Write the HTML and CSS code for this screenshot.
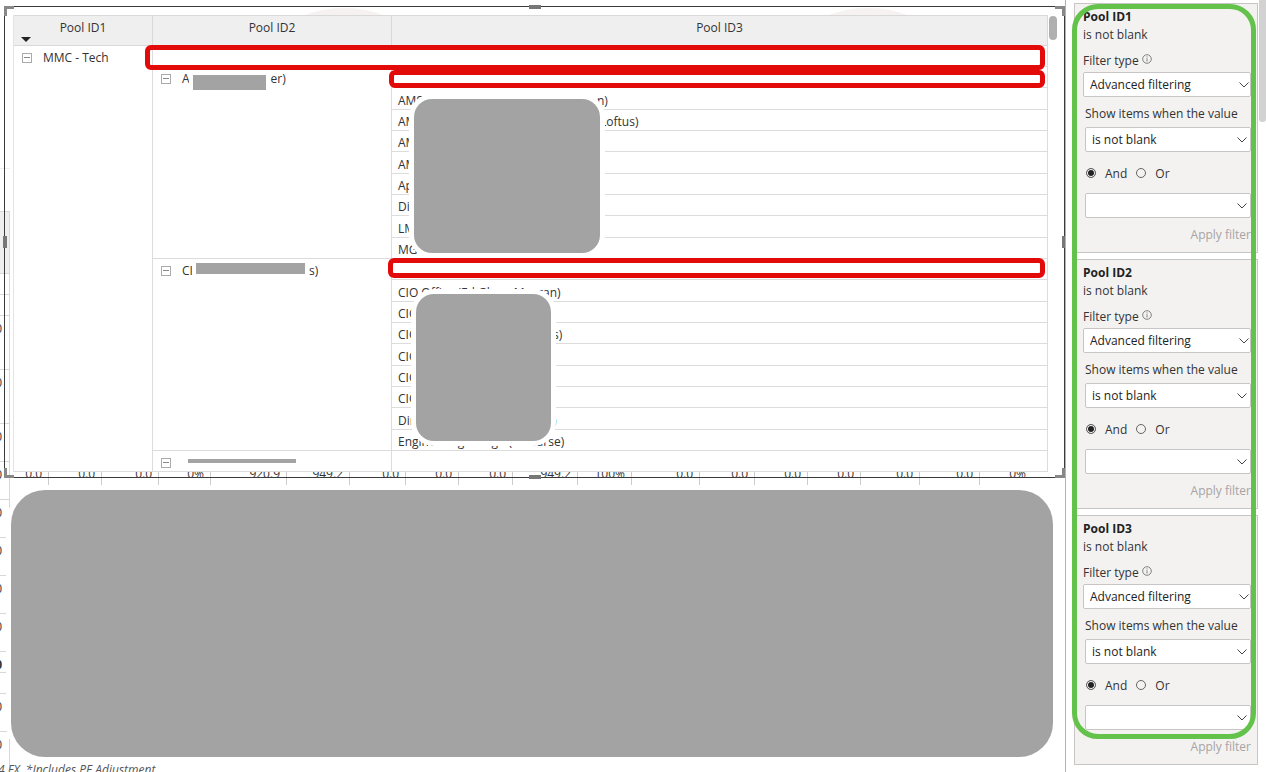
FILE: index.html
```html
<!DOCTYPE html>
<html lang="en">
<head>
<meta charset="UTF-8" />
<meta name="viewport" content="width=device-width, initial-scale=1" />
<title>Pool Report</title>
<link rel="stylesheet" href="styles.css">
</head>
<body>

<main class="canvas">
  <!-- report page behind the selected visual -->
  <div class="edge">
    <div class="edge-top"></div>
    <div class="edge-gap"></div>
    <div class="edge-head"></div>
    <div class="short"></div>
    <div class="short"></div>
    <div class="tall">0</div>
    <div class="tall">0</div>
    <div>0</div>
    <div>0</div>
    <div>0</div>
    <div>0</div>
    <div>0</div>
    <div>0</div>
    <div class="short total">0</div>
    <div class="short"></div>
    <div>0</div>
    <div class="last">0</div>
  </div>

  <div class="page">
    <div class="page-top">
      <span class="bubble"></span>
      <span class="bubble"></span>
    </div>
    <div class="totals">
      <span>0.0</span><span>0.0</span><span>0.0</span><span>0%</span><span>920.9</span><span>949.2</span>
      <span>0.0</span><span>0.0</span><span>0.0</span><span>949.2</span><span>100%</span><span>0.0</span>
      <span>0.0</span><span>0.0</span><span>0.0</span><span>0.0</span><span>0.0</span><span>0%</span>
    </div>
    <div class="cover"></div>
    <p class="footnote">4 FX. *Includes PE Adjustment</p>
  </div>

  <!-- selected matrix visual -->
  <section class="visual">
    <i class="corner tl"></i><i class="corner tr"></i><i class="corner bl"></i><i class="corner br"></i>
    <i class="handle top"></i><i class="handle bottom"></i><i class="handle left"></i><i class="handle right"></i>
    <table class="matrix">
      <colgroup><col class="col1"><col class="col2"><col></colgroup>
      <thead>
        <tr>
          <th>Pool ID1<span class="sort"></span></th>
          <th>Pool ID2</th>
          <th>Pool ID3</th>
        </tr>
      </thead>
      <tbody>
        <tr>
          <td class="group" rowspan="20"><div class="node"><button class="toggle" aria-label="Collapse"></button>MMC - Tech</div></td>
          <td class="marked" colspan="2"><span class="mark mark-wide"></span></td>
        </tr>
        <tr>
          <td class="group" rowspan="9"><div class="node"><button class="toggle" aria-label="Collapse"></button>A<span class="bar bar-a"></span>er)</div></td>
          <td class="marked"><span class="mark mark-first"></span></td>
        </tr>
        <tr><td class="marked"><span class="lead">AMS</span>n)<span class="block block-a"></span></td></tr>
        <tr><td><span class="lead lead-b">AMS</span>Loftus)</td></tr>
        <tr><td>AMS</td></tr>
        <tr><td>AMS</td></tr>
        <tr><td>App</td></tr>
        <tr><td>Digi</td></tr>
        <tr><td>LMS</td></tr>
        <tr><td>MGT</td></tr>
        <tr>
          <td class="group" rowspan="9"><div class="node"><button class="toggle" aria-label="Collapse"></button>CI<span class="bar bar-c"></span>s)</div></td>
          <td class="marked"><span class="mark"></span></td>
        </tr>
        <tr><td class="marked">CIO Office (Ed Glynn Morgan)<span class="block block-c"></span></td></tr>
        <tr><td>CIO</td></tr>
        <tr><td><span class="lead lead-c">CIO</span>s)</td></tr>
        <tr><td>CIO</td></tr>
        <tr><td>CIO</td></tr>
        <tr><td>CIO</td></tr>
        <tr><td><span class="lead lead-c">Dire</span>)</td></tr>
        <tr><td>Engineering Design (E Coarse)</td></tr>
        <tr>
          <td class="group"><div class="node"><button class="toggle" aria-label="Collapse"></button><span class="bar bar-last"></span></div></td>
          <td></td>
        </tr>
      </tbody>
    </table>
    <div class="scroll"></div>
  </section>
</main>

<aside class="filters">
  <div class="cards">
    <section class="card">
      <h2>Pool ID1</h2>
      <p>is not blank</p>
      <div class="type">
        <label for="type1">Filter type</label>
        <svg class="info" viewBox="0 0 10 10"><circle cx="5" cy="5" r="4.3"/><path d="M5 4.3v3.2M5 2.4v1"/></svg>
      </div>
      <div class="drop wide">
        <select id="type1"><option>Advanced filtering</option></select>
        <svg viewBox="0 0 10 6"><path d="M.5.5 5 5 9.5.5"/></svg>
      </div>
      <div class="rule">
        <label for="cond1">Show items when the value</label>
        <div class="drop">
          <select id="cond1"><option>is not blank</option></select>
          <svg viewBox="0 0 10 6"><path d="M.5.5 5 5 9.5.5"/></svg>
        </div>
        <div class="logic">
          <input type="radio" name="logic1" id="and1" checked><label for="and1">And</label>
          <input type="radio" name="logic1" id="or1"><label for="or1">Or</label>
        </div>
        <div class="drop">
          <select aria-label="Second condition"><option></option></select>
          <svg viewBox="0 0 10 6"><path d="M.5.5 5 5 9.5.5"/></svg>
        </div>
      </div>
      <button class="apply" disabled>Apply filter</button>
    </section>

    <section class="card">
      <h2>Pool ID2</h2>
      <p>is not blank</p>
      <div class="type">
        <label for="type2">Filter type</label>
        <svg class="info" viewBox="0 0 10 10"><circle cx="5" cy="5" r="4.3"/><path d="M5 4.3v3.2M5 2.4v1"/></svg>
      </div>
      <div class="drop wide">
        <select id="type2"><option>Advanced filtering</option></select>
        <svg viewBox="0 0 10 6"><path d="M.5.5 5 5 9.5.5"/></svg>
      </div>
      <div class="rule">
        <label for="cond2">Show items when the value</label>
        <div class="drop">
          <select id="cond2"><option>is not blank</option></select>
          <svg viewBox="0 0 10 6"><path d="M.5.5 5 5 9.5.5"/></svg>
        </div>
        <div class="logic">
          <input type="radio" name="logic2" id="and2" checked><label for="and2">And</label>
          <input type="radio" name="logic2" id="or2"><label for="or2">Or</label>
        </div>
        <div class="drop">
          <select aria-label="Second condition"><option></option></select>
          <svg viewBox="0 0 10 6"><path d="M.5.5 5 5 9.5.5"/></svg>
        </div>
      </div>
      <button class="apply" disabled>Apply filter</button>
    </section>

    <section class="card">
      <h2>Pool ID3</h2>
      <p>is not blank</p>
      <div class="type">
        <label for="type3">Filter type</label>
        <svg class="info" viewBox="0 0 10 10"><circle cx="5" cy="5" r="4.3"/><path d="M5 4.3v3.2M5 2.4v1"/></svg>
      </div>
      <div class="drop wide">
        <select id="type3"><option>Advanced filtering</option></select>
        <svg viewBox="0 0 10 6"><path d="M.5.5 5 5 9.5.5"/></svg>
      </div>
      <div class="rule">
        <label for="cond3">Show items when the value</label>
        <div class="drop">
          <select id="cond3"><option>is not blank</option></select>
          <svg viewBox="0 0 10 6"><path d="M.5.5 5 5 9.5.5"/></svg>
        </div>
        <div class="logic">
          <input type="radio" name="logic3" id="and3" checked><label for="and3">And</label>
          <input type="radio" name="logic3" id="or3"><label for="or3">Or</label>
        </div>
        <div class="drop">
          <select aria-label="Second condition"><option></option></select>
          <svg viewBox="0 0 10 6"><path d="M.5.5 5 5 9.5.5"/></svg>
        </div>
      </div>
      <button class="apply" disabled>Apply filter</button>
    </section>
    <div class="ring"></div>
  </div>
  <div class="pane-scroll"></div>
</aside>

</body>
</html>
```

FILE: styles.css
```css
* {
  box-sizing: border-box;
}
body {
  margin: 0;
  height: 100vh;
  overflow: hidden;
  display: flex;
  font-family: "Open Sans", sans-serif;
  font-size: 12px;
  color: #333;
  background: #fff;
}
h2, p {
  margin: 0;
}

/* report page */
.canvas {
  position: relative;
  flex: 1;
  min-width: 0;
  display: flex;
  overflow: hidden;
  border-right: 1px solid #b5b2b0;
}
.edge {
  width: 10px;
  flex: none;
  line-height: 26px;
}
.edge div {
  height: 38px;
  display: flex;
  justify-content: flex-end;
  overflow: hidden;
  padding-right: 7px;
  border-bottom: 1px solid #d8d8d8;
  border-right: 1px solid #d8d8d8;
}
.edge .edge-top {
  height: 169px;
  border-right: none;
  border-color: #eee;
}
.edge .edge-gap {
  height: 43px;
  border-right: none;
}
.edge .edge-head {
  height: 62px;
  background: #efefef;
}
.edge .short {
  height: 21px;
}
.edge .tall {
  height: 54px;
}
.edge .total {
  font-weight: bold;
}
.edge .last {
  border-bottom: none;
}
.page {
  flex: 1;
  min-width: 0;
}
.page-top {
  height: 466px;
  padding: 8px 13% 0 26%;
  display: flex;
  justify-content: space-between;
}
.bubble {
  width: 120px;
  height: 60px;
  border-radius: 50%;
  background: #f5f2f1;
}
.totals {
  display: grid;
  grid-template-columns: 39fr 53fr 57fr 52fr 76fr 63fr 56fr 53fr 54fr 65fr 54fr 68fr 55fr 53fr 53fr 59fr 60fr 52fr;
  padding-right: 33px;
  height: 19px;
  line-height: 16px;
}
.totals span {
  text-align: right;
  padding-right: 6px;
  border-right: 1px solid #ccc;
}
.totals span:last-child {
  border-right: none;
}
.cover {
  position: relative;
  height: 267px;
  margin: 5px 12px 0 1px;
  border-radius: 34px;
  background: #a3a3a3;
  box-shadow: 0 0 0 5px #fff;
}
.footnote {
  margin: 5px 0 0 -12px;
  font-style: italic;
  line-height: 16px;
  color: #555;
}

/* selected visual */
.visual {
  position: absolute;
  top: 6px;
  left: 4px;
  right: 0;
  display: flex;
  padding: 8px 6px 5px 8px;
  border: 1px solid #3b3b3b;
}
.corner {
  position: absolute;
  width: 10px;
  height: 10px;
  border: 0 solid #888;
}
.tl { top: -1px; left: -1px; border-width: 3px 0 0 3px; }
.tr { top: -1px; right: -1px; border-width: 3px 3px 0 0; }
.bl { bottom: -1px; left: -1px; border-width: 0 0 3px 3px; }
.br { bottom: -1px; right: -1px; border-width: 0 3px 3px 0; }
.handle {
  position: absolute;
  background: #777;
}
.handle.top, .handle.bottom {
  width: 12px;
  height: 4px;
  left: calc(50% - 6px);
}
.handle.left, .handle.right {
  width: 4px;
  height: 12px;
  top: calc(50% - 6px);
}
.handle.top { top: -2px; }
.handle.bottom { bottom: -2px; }
.handle.left { left: -2px; }
.handle.right { right: -2px; }

.matrix {
  flex: 1;
  table-layout: fixed;
  border-spacing: 0;
  background: #fff;
  border-left: 1px solid #e4e4e4;
}
.col1 { width: 139px; }
.col2 { width: 239px; }
.matrix th {
  position: relative;
  height: 31px;
  padding: 0 0 6px;
  font-weight: normal;
  line-height: 23px;
  background: #efefef;
  border-top: 1px solid #d9d9d9;
  border-bottom: 1px solid #d9d9d9;
  border-right: 1px solid #d9d9d9;
}
.sort {
  position: absolute;
  left: 7px;
  bottom: 3px;
  border: 5px solid transparent;
  border-top-color: #222;
  border-bottom: none;
}
.matrix tbody tr {
  height: 21px;
}
.matrix tbody tr:nth-child(3n) {
  height: 22px;
}
.matrix td {
  padding: 3px 6px 0;
  line-height: 17px;
  white-space: nowrap;
  border-right: 1px solid #dcdcdc;
  border-bottom: 1px solid #dcdcdc;
}
.matrix .group {
  padding: 3px 8px 0;
  vertical-align: top;
}
.node {
  display: flex;
  align-items: center;
  height: 17px;
}
.toggle {
  width: 10px;
  height: 10px;
  margin-right: 11px;
  padding: 0;
  border: 1px solid #aaa;
  background: linear-gradient(#888, #888) center / 6px 1px no-repeat #fff;
}
.bar {
  position: relative;
  background: #a3a3a3;
  box-shadow: 0 0 0 4px #fff;
}
.bar-a { width: 73px; height: 15px; margin: 7px 5px 0 3px; }
.bar-c { width: 109px; height: 11px; margin: 0 4px 4px 3px; }
.bar-last { width: 108px; height: 4px; margin: 0 0 4px 6px; }
.marked {
  position: relative;
}
.mark {
  position: absolute;
  inset: -1px 2px 1px -4px;
  border: 5px solid #e30a0a;
  border-radius: 6px;
}
.mark-wide { inset: -1px 2px -4px -8px; }
.mark-first { inset: 3px 2px -1px -3px; }
.lead {
  display: inline-block;
  width: 199px;
}
.lead-b { width: 202px; }
.lead-c { width: 155px; }
.block {
  position: absolute;
  background: #a3a3a3;
  border-radius: 18px;
  box-shadow: 0 0 0 5px #fff;
}
.block-a {
  top: 11px;
  left: 22px;
  width: 186px;
  height: 154px;
}
.block-c {
  top: 14px;
  left: 24px;
  width: 135px;
  height: 147px;
}
.scroll {
  width: 8px;
  height: 24px;
  margin: 1px 1px 0;
  border-radius: 4px;
  background: #b0b0b0;
}

/* filter pane */
.filters {
  width: 200px;
  flex: none;
  display: flex;
  justify-content: flex-end;
}
.cards {
  position: relative;
  flex: 1;
  display: flex;
  flex-direction: column;
  gap: 6px;
  padding: 3px 1px 0 8px;
}
.card {
  display: flex;
  flex-direction: column;
  flex: none;
  padding: 4px 6px 8px 8px;
  background: #f3f2f1;
  border: 1px solid #c8c6c4;
}
.card h2 {
  font-size: 12px;
  line-height: 18px;
  color: #222;
}
.card p {
  line-height: 18px;
}
.type {
  display: flex;
  gap: 3px;
  line-height: 18px;
  margin: 8px 0 2px;
}
.info {
  width: 10px;
  height: 10px;
  margin-top: 2px;
  fill: none;
  stroke: #666;
  stroke-width: 0.8;
}
.drop {
  position: relative;
  height: 25px;
}
.drop select {
  width: 100%;
  height: 100%;
  padding: 0 6px;
  appearance: none;
  font: inherit;
  color: #222;
  background: #fff;
  border: 1px solid #c8c6c4;
  border-radius: 2px;
}
.drop svg {
  position: absolute;
  right: 4px;
  top: 10px;
  width: 10px;
  height: 6px;
  fill: none;
  stroke: #444;
  pointer-events: none;
}
.drop.wide svg {
  right: 2px;
}
.rule {
  padding: 8px 0 0 2px;
}
.rule > label {
  display: block;
  line-height: 18px;
  margin-bottom: 4px;
}
.logic {
  display: flex;
  align-items: center;
  height: 41px;
}
.logic input {
  appearance: none;
  width: 10px;
  height: 10px;
  margin: 0 9px 0 1px;
  border: 1px solid #666;
  border-radius: 50%;
}
.logic input:checked {
  background: #222;
  box-shadow: inset 0 0 0 1px #fff;
}
.logic label {
  margin-right: 8px;
  padding-top: 2px;
}
.apply {
  align-self: flex-end;
  margin-top: 8px;
  padding: 0;
  font: inherit;
  line-height: 18px;
  color: #a6a4a2;
  background: none;
  border: none;
}
.ring {
  position: absolute;
  top: 4px;
  left: 6px;
  right: 3px;
  height: 735px;
  border: 5px solid #62c24a;
  border-radius: 26px;
  pointer-events: none;
}
.pane-scroll {
  width: 7px;
  height: 122px;
  background: #d2d2d2;
  border-radius: 0 0 3px 3px;
}
```
